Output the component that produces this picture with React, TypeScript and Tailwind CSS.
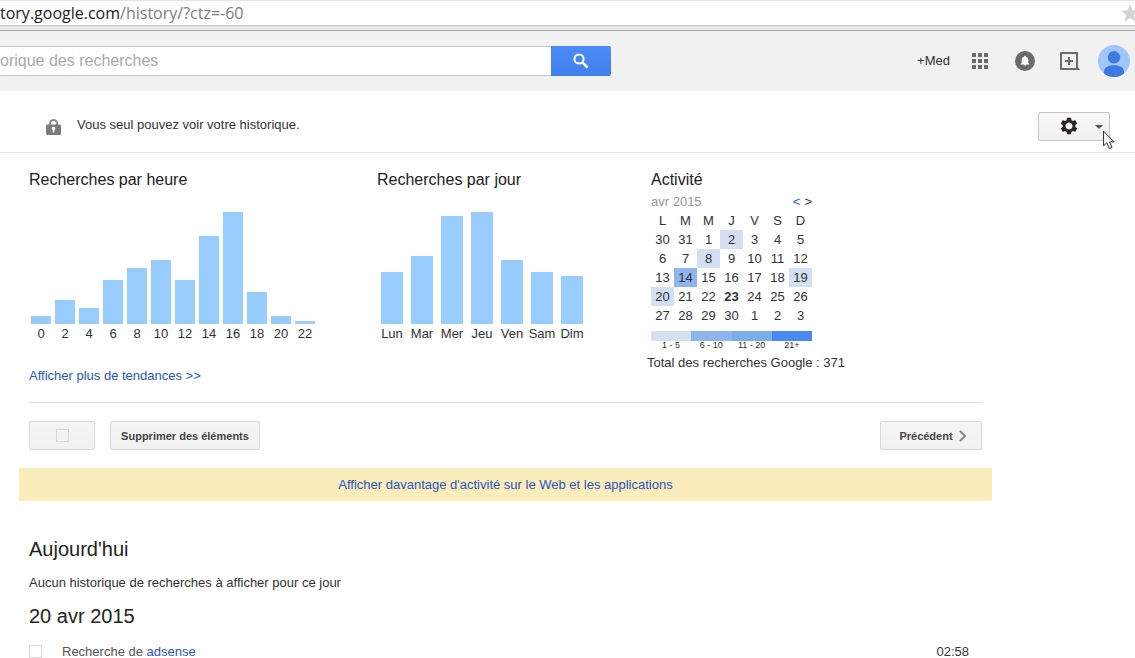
const HOURS = [
  { label: '0', height: 8 },
  { label: '2', height: 24 },
  { label: '4', height: 16 },
  { label: '6', height: 44 },
  { label: '8', height: 56 },
  { label: '10', height: 64 },
  { label: '12', height: 44 },
  { label: '14', height: 88 },
  { label: '16', height: 112 },
  { label: '18', height: 32 },
  { label: '20', height: 8 },
  { label: '22', height: 3 },
];

const DAYS = [
  { label: 'Lun', height: 52 },
  { label: 'Mar', height: 68 },
  { label: 'Mer', height: 108 },
  { label: 'Jeu', height: 112 },
  { label: 'Ven', height: 64 },
  { label: 'Sam', height: 52 },
  { label: 'Dim', height: 48 },
];

const WEEKS = [
  [30, 31, 1, 2, 3, 4, 5],
  [6, 7, 8, 9, 10, 11, 12],
  [13, 14, 15, 16, 17, 18, 19],
  [20, 21, 22, 23, 24, 25, 26],
  [27, 28, 29, 30, 1, 2, 3],
];

// keyed by "week-day"
const CELL_STYLES: Record<string, string> = {
  '0-3': 'bg-[#d4dff1]',
  '1-2': 'bg-[#d4dff1]',
  '2-1': 'bg-[#8eb5ee]',
  '2-6': 'bg-[#d4dff1]',
  '3-0': 'bg-[#d4dff1]',
  '3-3': 'font-bold',
};

const LEGEND = [
  { label: '1 - 5', color: 'bg-[#d4dff1]' },
  { label: '6 - 10', color: 'bg-[#8eb5ee]' },
  { label: '11 - 20', color: 'bg-[#78aeea]' },
  { label: '21+', color: 'bg-[#4a8af0]' },
];

const BUTTON =
  'flex h-[29px] items-center justify-center rounded-xs border border-[#d8d8d8] bg-linear-to-b from-[#f5f5f5] to-[#f1f1f1] text-[11px] font-bold text-[#444]';

const CHECKBOX =
  'block size-[13px] appearance-none border border-[#d8d8d8] bg-transparent';

type Bar = { label: string; height: number };

const BarChart = ({
  title,
  bars,
  slot,
  bar,
}: {
  title: string;
  bars: Bar[];
  slot: string;
  bar: string;
}) => (
  <section>
    <h2 className="text-base leading-6 text-[#222]">{title}</h2>
    <div className="mt-5 flex h-28 items-end">
      {bars.map(({ label, height }) => (
        <div key={label} className={`flex justify-center ${slot}`}>
          <div className={`bg-[#99ccff] ${bar}`} style={{ height }} />
        </div>
      ))}
    </div>
    <div className="flex leading-5">
      {bars.map(({ label }) => (
        <span key={label} className={`text-center ${slot}`}>
          {label}
        </span>
      ))}
    </div>
  </section>
);

const Calendar = () => (
  <section>
    <h2 className="text-base leading-6 text-[#222]">Activité</h2>
    <div className="flex h-[19px] w-[161px] items-center justify-between">
      <span className="text-[#999]">avr 2015</span>
      <span className="flex gap-1">
        <a href="#prev" className="text-[#2a56c6]">
          &lt;
        </a>
        <span>&gt;</span>
      </span>
    </div>
    <table className="w-[161px] table-fixed border-collapse text-center">
      <thead>
        <tr>
          {['L', 'M', 'M', 'J', 'V', 'S', 'D'].map((day, i) => (
            <th key={i} className="h-[19px] p-0 font-normal leading-[19px]">
              {day}
            </th>
          ))}
        </tr>
      </thead>
      <tbody>
        {WEEKS.map((week, w) => (
          <tr key={w}>
            {week.map((day, d) => (
              <td
                key={d}
                className={`h-[19px] p-0 leading-[19px] ${CELL_STYLES[`${w}-${d}`] ?? ''}`}
              >
                {day}
              </td>
            ))}
          </tr>
        ))}
      </tbody>
    </table>
    <div className="mt-1.5 flex w-[161px]">
      {LEGEND.map(({ label, color }) => (
        <div key={label} className="flex-1 text-center text-[9px] leading-2">
          <div className={`h-2.5 ${color}`} />
          {label}
        </div>
      ))}
    </div>
    <p className="-ml-1 mt-1 leading-5">Total des recherches Google : 371</p>
  </section>
);

const AddressBar = () => (
  <div className="border-b border-[#a8a8a8] bg-[#e6e6e6] pb-1">
    <div className="flex h-[26px] items-center justify-between overflow-hidden border-y border-t-[#e5e5e5] border-b-[#c6c6c6] bg-white">
      <div className="whitespace-nowrap font-['Open_Sans',sans-serif] text-base leading-6 text-[#222]">
        tory.google.com<span className="text-[#7d7d7d]">/history/?ctz=-60</span>
      </div>
      <svg className="-mr-1 size-[18px] shrink-0" viewBox="0 0 18 18" fill="#d4d4d4">
        <path d="M9 0l2.5 6.3 6.5.5-5 4.3 1.6 6.6L9 14.100l-5.600 3.600L5 11.100 0 6.800l6.500-.5z" />
      </svg>
    </div>
  </div>
);

const Header = () => (
  <header className="flex h-[60px] items-center justify-between bg-[#f1f1f1] pr-[5px]">
    <form className="flex w-[611px]">
      <input
        type="text"
        aria-label="orique des recherches"
        placeholder="orique des recherches"
        className="h-[30px] min-w-0 flex-1 border-y border-[#c6c6c6] bg-white text-base placeholder:text-[#a9a9a9]"
      />
      <button
        type="button"
        aria-label="Rechercher"
        className="flex h-[30px] w-[60px] items-center justify-center rounded-r-xs bg-linear-to-b from-[#4a8cf7] to-[#427fec]"
      >
        <svg className="size-4" viewBox="0 0 16 16" fill="none" stroke="#fff">
          <circle cx="6" cy="6" r="4.600" strokeWidth="2" />
          <path d="M9.300 9.300l5.200 5.200" strokeWidth="2.600" />
        </svg>
      </button>
    </form>
    <div className="flex items-center">
      <a href="#med" className="mr-[7px]">
        +Med
      </a>
      <button type="button" aria-label="Applications" className="flex w-[45px] justify-center">
        <svg className="size-4" viewBox="0 0 16 16" fill="#6b6b6b">
          <path d="M0 0h4v4H0zM6 0h4v4H6zM12 0h4v4h-4zM0 6h4v4H0zM6 6h4v4H6zM12 6h4v4h-4zM0 12h4v4H0zM6 12h4v4H6zM12 12h4v4h-4z" />
        </svg>
      </button>
      <button type="button" aria-label="Notifications" className="flex w-[45px] justify-center">
        <svg className="size-5" viewBox="0 0 20 20">
          <circle cx="10" cy="10" r="10" fill="#6b6b6b" />
          <path
            d="M10 4.800c.6 0 1 .4 1 1 1.500.5 2.300 1.700 2.300 3.200v2.800l1.100 1.200v.6H5.600V13l1.100-1.200V9c0-1.500.8-2.700 2.300-3.200 0-.6.4-1 1-1zM8.700 13.600h2.600c0 .8-.6 1.200-1.300 1.200s-1.300-.4-1.300-1.200z"
            fill="#fff"
          />
        </svg>
      </button>
      <button type="button" aria-label="Partager" className="mr-[6px] flex w-[45px] justify-center">
        <svg className="size-5" viewBox="0 0 20 20" fill="none" stroke="#6b6b6b" strokeWidth="2">
          <path d="M1 2h16v16H1z" strokeLinejoin="round" />
          <path d="M9 6v8M5 10h8" />
          <path d="M17 15l3 4h-4z" fill="#6b6b6b" stroke="none" />
        </svg>
      </button>
      <button type="button" aria-label="Compte">
        <svg className="size-8" viewBox="0 0 32 32">
          <circle cx="16" cy="16" r="16" fill="#a0c6fc" />
          <circle cx="16" cy="12.300" r="6.200" fill="#3c79e0" />
          <path d="M6 28.500v-2c0-4 4-6.300 10-6.300s10 2.300 10 6.300v2C23 31 20 32 16 32s-7-1-10-3.500z" fill="#3c79e0" />
        </svg>
      </button>
    </div>
  </header>
);

const PrivacyBar = () => (
  <div className="flex h-[62px] items-center border-b border-[#e5e5e5] pl-[46px] pr-[25px] pt-2.5">
    <svg className="h-4 w-[15px]" viewBox="0 0 15 16">
      <path d="M4 7V4.500a3.500 3.500 0 0 1 7 0V7" fill="none" stroke="#8a8a8a" strokeWidth="2" />
      <rect y="5.500" width="15" height="10.500" rx="1.500" fill="#7b7b7f" />
      <circle cx="7.500" cy="9.500" r="1.700" fill="#fff" />
      <path d="M6.700 10h1.600v3.500H6.700z" fill="#fff" />
    </svg>
    <p className="ml-4 pb-1">Vous seul pouvez voir votre historique.</p>
    <button
      type="button"
      aria-label="Options"
      className="relative ml-auto flex h-[29px] w-[72px] items-center rounded-xs border border-[#c6c6c6] bg-linear-to-b from-[#f8f8f8] to-[#f1f1f1] pl-5"
    >
      <svg className="mb-0.5 size-5" viewBox="0 0 24 24" fill="#2d2225">
        <path d="M19.430 12.980c.04-.32.07-.64.07-.98s-.03-.66-.07-.98l2.110-1.650c.19-.15.24-.42.12-.64l-2-3.460c-.12-.22-.39-.3-.61-.22l-2.490 1c-.52-.4-1.080-.73-1.690-.98l-.38-2.650C14.460 2.180 14.250 2 14 2h-4c-.25 0-.46.18-.49.42l-.38 2.650c-.61.25-1.170.59-1.690.98l-2.490-1c-.23-.09-.49 0-.61.22l-2 3.460c-.13.22-.07.49.12.64l2.110 1.650c-.04.32-.07.65-.07.98s.03.66.07.98l-2.110 1.650c-.19.15-.24.42-.12.64l2 3.460c.12.22.39.3.61.22l2.490-1c.52.4 1.080.73 1.690.98l.38 2.650c.03.24.24.42.49.42h4c.25 0 .46-.18.49-.42l.38-2.650c.61-.25 1.170-.59 1.690-.98l2.490 1c.23.09.49 0 .61-.22l2-3.460c.12-.22.07-.49-.12-.64l-2.110-1.650zM12 16.300c-2.370 0-4.300-1.930-4.300-4.300S9.630 7.700 12 7.700s4.300 1.930 4.300 4.300-1.930 4.300-4.300 4.300z" />
      </svg>
      <svg className="ml-4 h-1 w-2" viewBox="0 0 8 4" fill="#555">
        <path d="M0 0h8L4 4z" />
      </svg>
      <svg className="absolute left-16 top-[17px] h-5 w-3" viewBox="0 0 12 20">
        <path
          d="M.6 1.200v14.600l3.300-3.100 2.500 5.900 2.600-1.100-2.500-5.600h4.600z"
          fill="#fff"
          stroke="#2b2140"
        />
      </svg>
    </button>
  </div>
);

const App = () => {
  return (
    <div className="bg-[#fefefe] font-['Liberation_Sans',Arial,sans-serif] text-[13px] leading-4 text-[#333]">
      <AddressBar />
      <Header />
      <PrivacyBar />
      <main className="pl-[19px] pr-[143px]">
        <div className="px-2.5 pt-[15px]">
          <div className="grid grid-cols-[348px_274px_1fr]">
            <div>
              <BarChart title="Recherches par heure" bars={HOURS} slot="w-6" bar="w-5" />
              <a href="#tendances" className="mt-[22px] block leading-5 text-[#2a56c6]">
                Afficher plus de tendances &gt;&gt;
              </a>
            </div>
            <BarChart title="Recherches par jour" bars={DAYS} slot="w-[30px]" bar="w-[22px]" />
            <Calendar />
          </div>
          <hr className="mt-4 border-[#e5e5e5]" />
          <div className="mt-[18px] flex">
            <label className={`w-[66px] ${BUTTON}`}>
              <input type="checkbox" aria-label="Tout sélectionner" className={CHECKBOX} />
            </label>
            <button type="button" className={`ml-[15px] w-[150px] ${BUTTON}`}>
              Supprimer des éléments
            </button>
            <button type="button" className={`ml-auto w-[102px] gap-1.5 pl-1 ${BUTTON}`}>
              Précédent
              <svg className="h-3 w-2" viewBox="0 0 8 12" fill="none" stroke="#888" strokeWidth="2">
                <path d="M1 1l5 5-5 5" />
              </svg>
            </button>
          </div>
        </div>
        <div className="mt-[18px] bg-[#faecbb] text-center leading-[33px]">
          <a href="#activite" className="text-[#2a56c6]">
            Afficher davantage d'activité sur le Web et les applications
          </a>
        </div>
        <div className="px-2.5 pt-[34px]">
          <h2 className="text-xl leading-7 text-[#222]">Aujourd'hui</h2>
          <p className="mt-2.5 leading-5">Aucun historique de recherches à afficher pour ce jour</p>
          <h2 className="mt-[9px] text-xl leading-7 text-[#222]">20 avr 2015</h2>
          <div className="mt-[15px] flex items-center leading-[13px]">
            <input type="checkbox" id="adsense" className={CHECKBOX} />
            <label htmlFor="adsense" className="ml-5 text-[#555]">
              Recherche de{' '}
              <a href="#adsense" className="text-[#2a56c6]">
                adsense
              </a>
            </label>
            <time className="ml-auto pr-[13px]">02:58</time>
          </div>
        </div>
      </main>
    </div>
  );
};

export default App;
